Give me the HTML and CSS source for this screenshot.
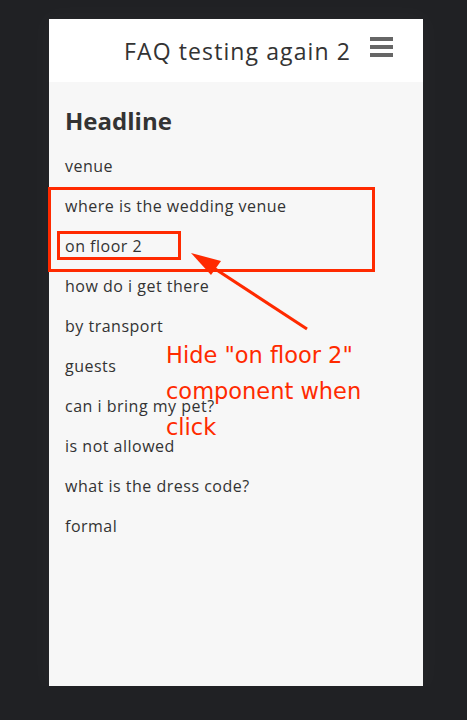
FILE: index.html
```html
<!DOCTYPE html>
<html lang="en">
<head>
  <meta charset="UTF-8">
  <title>FAQ testing again 2</title>
  <meta name="viewport" content="width=device-width, initial-scale=1.0">
  <link rel="stylesheet" href="styles.css">
</head>
<body>

  <div class="phone">
    <header class="topbar">
      <span class="title">FAQ testing again 2</span>
      <span class="burger"><i></i><i></i><i></i></span>
    </header>

    <main class="faq">
      <h1>Headline</h1>
      <p>venue</p>
      <p>where is the wedding venue</p>
      <p>on floor 2</p>
      <p>how do i get there</p>
      <p>by transport</p>
      <p>guests</p>
      <p>can i bring my pet?</p>
      <p>is not allowed</p>
      <p>what is the dress code?</p>
      <p>formal</p>
    </main>

    <!-- annotation layer -->
    <div class="mark mark-group"></div>
    <div class="mark mark-answer"></div>
    <svg class="arrow" width="130" height="90" viewBox="0 0 130 90">
      <line x1="118" y1="80" x2="14" y2="12" stroke="#ff2a00" stroke-width="3"/>
      <polygon points="2,4 32,12 22,26" fill="#ff2a00"/>
    </svg>
    <div class="note">Hide "on floor 2"<br>component when<br>click</div>
  </div>

</body>
</html>
```

FILE: styles.css
```css
* { box-sizing: border-box; }
body {
  margin: 0;
  padding: 19px 0 0 49px;
  background-color: #202124;
  font-family: "Open Sans", Arial, sans-serif;
  color: #333;
}
.phone {
  position: relative;
  width: 374px;
  height: 667px;
  background: #f7f7f7;
  box-shadow: 0 0 24px 6px rgba(255, 255, 255, 0.025);
}
.topbar {
  height: 63px;
  background: #fff;
  display: flex;
  align-items: center;
  justify-content: flex-end;
  gap: 19px;
  padding-right: 30px;
}
.title {
  font-size: 23px;
  letter-spacing: 1.1px;
  color: #333;
}
.burger {
  display: flex;
  flex-direction: column;
  gap: 4px;
  width: 23px;
  margin-top: -8px;
}
.burger i {
  display: block;
  height: 4px;
  background: #666;
}
.faq {
  padding: 21px 16px 0;
}
.faq h1 {
  margin: 0 0 7px;
  font-size: 24px;
  line-height: 36px;
  font-weight: 700;
}
.faq p {
  margin: 0;
  font-size: 16px;
  letter-spacing: 0.5px;
  line-height: 40px;
}
.mark {
  position: absolute;
  border: 3px solid #ff2a00;
}
.mark-group {
  left: -1px;
  top: 168px;
  width: 327px;
  height: 85px;
}
.mark-answer {
  left: 8px;
  top: 212px;
  width: 124px;
  height: 29px;
}
.arrow {
  position: absolute;
  left: 140px;
  top: 230px;
}
.note {
  position: absolute;
  left: 117px;
  top: 318px;
  font-family: "DejaVu Sans", sans-serif;
  font-size: 22.5px;
  line-height: 36px;
  color: #ff2a00;
}
```
